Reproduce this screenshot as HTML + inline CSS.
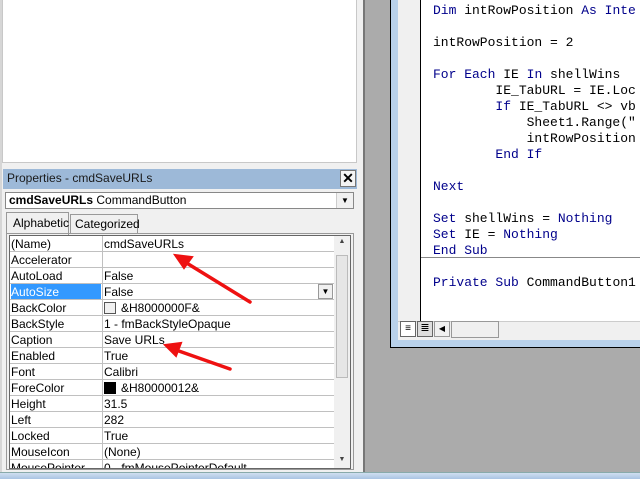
<!DOCTYPE html>
<html><head><style>
*{margin:0;padding:0;box-sizing:border-box}
body{width:640px;height:479px;overflow:hidden;background:#f0f0f0;position:relative;font-family:"Liberation Sans",sans-serif;font-size:12px}
.a{position:absolute}
.row{position:absolute;left:0;width:324px;height:16px;border-bottom:1px solid #c0c0c0;line-height:17px;white-space:nowrap}
.row span{position:absolute}
.n{left:1px;width:90px;height:15px}
.v{left:92px;border-left:1px solid #c0c0c0;height:16px;top:0;padding-left:1px;width:232px}
.code{position:absolute;font-family:"Liberation Mono",monospace;font-size:13px;white-space:pre;line-height:16px;color:#000}
.k{color:#00008b}
</style></head><body>
<div class="a" style="left:0;top:0;width:2px;height:472px;background:#d6d6d6"></div>
<div class="a" style="left:2px;top:0;width:355px;height:163px;background:#fff;border:1px solid #c8c8c8;border-top:none"></div>
<div class="a" style="left:3px;top:169px;width:354px;height:20px;background:#9db9d8;color:#1a1a1a;font-size:12px;line-height:19px;padding-left:4px">Properties - cmdSaveURLs</div>
<div class="a" style="left:340px;top:170px;width:16px;height:17px;background:#f4f4f4;border:1px solid #777;text-align:center;font-weight:bold;font-size:14px;line-height:14px">✕</div>
<div class="a" style="left:5px;top:192px;width:349px;height:17px;background:#fff;border:1px solid #888;font-size:12px;line-height:15px;padding-left:3px"><b>cmdSaveURLs</b> CommandButton</div>
<div class="a" style="left:336px;top:193px;width:17px;height:15px;background:#f0f0f0;border-left:1px solid #ccc;text-align:center;font-size:8px;line-height:15px">▼</div>
<div class="a" style="left:6px;top:212px;width:63px;height:23px;background:#f0f0f0;border:1px solid #999;border-bottom:none;font-size:12px;line-height:20px;padding-left:6px">Alphabetic</div>
<div class="a" style="left:70px;top:214px;width:68px;height:19px;border:1px solid #999;border-bottom:none;font-size:12px;line-height:19px;padding-left:4px">Categorized</div>
<div class="a" style="left:6px;top:233px;width:348px;height:237px;border:1px solid #999"></div>
<div class="a" style="left:9px;top:235px;width:342px;height:234px;background:#fff;border:1px solid #666;overflow:hidden">
 <div class="row" style="top:0"><span class="n">(Name)</span><span class="v">cmdSaveURLs</span></div>
 <div class="row" style="top:16px"><span class="n">Accelerator</span><span class="v"></span></div>
 <div class="row" style="top:32px"><span class="n">AutoLoad</span><span class="v">False</span></div>
 <div class="row" style="top:48px"><span class="n" style="background:#3399ff;color:#fff;top:0">AutoSize</span><span class="v">False<span style="position:absolute;right:1px;top:0;width:15px;height:15px;background:#f0f0f0;border:1px solid #999;font-size:8px;text-align:center;line-height:13px">▼</span></span></div>
 <div class="row" style="top:64px"><span class="n">BackColor</span><span class="v"><span style="position:relative;display:inline-block;width:12px;height:12px;border:1px solid #555;background:#f0f0f0;vertical-align:-2px;margin-right:5px"></span>&amp;H8000000F&amp;</span></div>
 <div class="row" style="top:80px"><span class="n">BackStyle</span><span class="v">1 - fmBackStyleOpaque</span></div>
 <div class="row" style="top:96px"><span class="n">Caption</span><span class="v">Save URLs</span></div>
 <div class="row" style="top:112px"><span class="n">Enabled</span><span class="v">True</span></div>
 <div class="row" style="top:128px"><span class="n">Font</span><span class="v">Calibri</span></div>
 <div class="row" style="top:144px"><span class="n">ForeColor</span><span class="v"><span style="position:relative;display:inline-block;width:12px;height:12px;background:#000;vertical-align:-2px;margin-right:5px"></span>&amp;H80000012&amp;</span></div>
 <div class="row" style="top:160px"><span class="n">Height</span><span class="v">31.5</span></div>
 <div class="row" style="top:176px"><span class="n">Left</span><span class="v">282</span></div>
 <div class="row" style="top:192px"><span class="n">Locked</span><span class="v">True</span></div>
 <div class="row" style="top:208px"><span class="n">MouseIcon</span><span class="v">(None)</span></div>
 <div class="row" style="top:224px"><span class="n">MousePointer</span><span class="v">0 - fmMousePointerDefault</span></div>
 <div class="a" style="left:324px;top:0;width:16px;height:232px;background:#f0f0f0"></div>
 <div class="a" style="left:326px;top:19px;width:12px;height:123px;background:#e6e6e6;border:1px solid #bbb"></div>
 <div class="a" style="left:326px;top:2px;width:12px;font-size:7px;text-align:center;color:#444">▲</div>
 <div class="a" style="left:326px;top:220px;width:12px;font-size:7px;text-align:center;color:#444">▼</div>
</div>
<svg class="a" style="left:0;top:0" width="360" height="479">
 <g stroke="#ee1111" stroke-width="3.5" fill="#ee1111" stroke-linecap="round">
  <line x1="250" y1="302" x2="185" y2="262"/>
  <polygon points="175,255 192,257 184,268" stroke-width="2"/>
  <line x1="230" y1="369" x2="176" y2="350"/>
  <polygon points="165,345 181,343 176,356" stroke-width="2"/>
 </g>
</svg>
<div class="a" style="left:363px;top:0;width:277px;height:472px;background:#ababab;border-left:2px solid #777"></div>
<div class="a" style="left:390px;top:0;width:250px;height:348px;background:#b9d1ea;border-left:1px solid #000;border-bottom:1px solid #000"></div>
<div class="a" style="left:398px;top:0;width:242px;height:340px;background:#f0f0f0"></div>
<div class="a" style="left:420px;top:0;width:220px;height:321px;background:#fff;border-left:1px solid #000"></div>
<div class="a" style="left:421px;top:257px;width:219px;height:1px;background:#888"></div>
<div class="a" style="left:398px;top:321px;width:242px;height:18px;background:#f0f0f0;border-top:1px solid #ccc"></div>
<div class="a" style="left:400px;top:321px;width:16px;height:16px;border:1px solid #666;background:#fff;font-size:10px;text-align:center;line-height:13px">≡</div>
<div class="a" style="left:417px;top:321px;width:16px;height:16px;border:1px solid #666;background:#ddd;font-size:11px;text-align:center;line-height:13px">≣</div>
<div class="a" style="left:434px;top:321px;width:16px;height:16px;border:1px solid #999;background:#f0f0f0;font-size:8px;text-align:center;line-height:14px">◀</div>
<div class="a" style="left:451px;top:321px;width:48px;height:17px;border:1px solid #999;background:#f0f0f0"></div>
<div class="code" style="left:433px;top:3px"><span class="k">Dim</span> intRowPosition <span class="k">As</span> <span class="k">Inte</span>

intRowPosition = 2

<span class="k">For Each</span> IE <span class="k">In</span> shellWins
        IE_TabURL = IE.Loc
        <span class="k">If</span> IE_TabURL &lt;&gt; vb
            Sheet1.Range("
            intRowPosition
        <span class="k">End If</span>

<span class="k">Next</span>

<span class="k">Set</span> shellWins = <span class="k">Nothing</span>
<span class="k">Set</span> IE = <span class="k">Nothing</span>
<span class="k">End Sub</span>

<span class="k">Private Sub</span> CommandButton1</div>
<div class="a" style="left:0;top:472px;width:640px;height:7px;background:linear-gradient(#d0dff0,#a9c4e3);border-top:1px solid #8aa"></div>
</body></html>
